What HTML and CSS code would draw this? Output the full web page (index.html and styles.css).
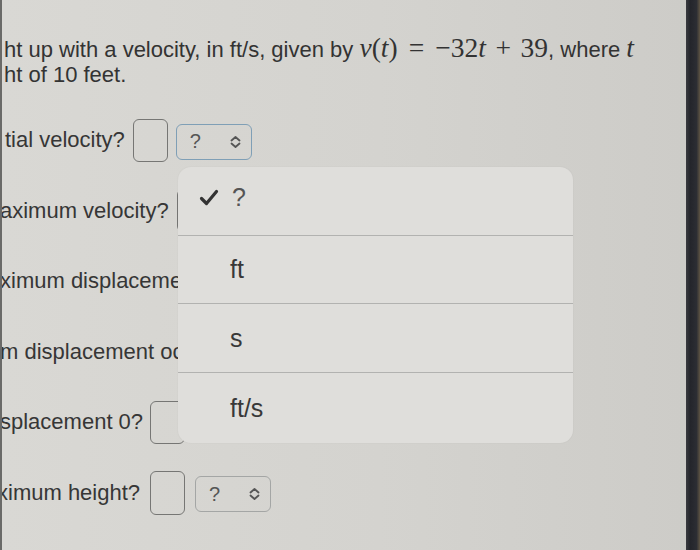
FILE: index.html
```html
<!DOCTYPE html>
<html>
<head>
<meta charset="utf-8">
<link rel="stylesheet" href="styles.css">
</head>
<body>
<div class="frame">
  <div class="screen">
    <p class="intro">ht up with a velocity, in ft/s, given by <span class="math"><i>v</i>(<i>t</i>)<span class="rel">=</span>−32<i>t</i><span class="bin">+</span>39</span>, where <span class="math"><i>t</i></span><br>ht of 10 feet.</p>
    <div class="qs">
      <div class="row r1"><span class="label">tial velocity?</span><span class="box"></span><span class="select focus"><span class="q">?</span><svg class="chev" width="11" height="12" viewBox="0 0 11 12"><path d="M1.5 4.5 L5.5 1 L9.5 4.5 M1.5 7.5 L5.5 11 L9.5 7.5"/></svg></span></div>
      <div class="row r2"><span class="label">aximum velocity?</span><span class="box"></span><span class="select"></span></div>
      <div class="row r3"><span class="label">ximum displacement?</span><span class="box"></span><span class="select"></span></div>
      <div class="row r4"><span class="label">m displacement occur?</span><span class="box"></span><span class="select"></span></div>
      <div class="row r5"><span class="label">splacement 0?</span><span class="box"></span><span class="select"></span></div>
      <div class="row r6"><span class="label">ximum height?</span><span class="box"></span><span class="select"><span class="q">?</span><svg class="chev" width="11" height="12" viewBox="0 0 11 12"><path d="M1.5 4.5 L5.5 1 L9.5 4.5 M1.5 7.5 L5.5 11 L9.5 7.5"/></svg></span></div>
    </div>
    <div class="popup">
      <div class="opt o1"><span class="chk"><svg width="20" height="17" viewBox="0 0 20 17"><path d="M2.5 9.5 L7.5 14.5 L17.5 2.5"/></svg></span><span class="otext dim">?</span></div>
      <div class="opt o2"><span class="chk"></span><span class="otext">ft</span></div>
      <div class="opt o3"><span class="chk"></span><span class="otext">s</span></div>
      <div class="opt o4"><span class="chk"></span><span class="otext">ft/s</span></div>
    </div>
  </div>
  <div class="bezel"></div>
</div>
</body>
</html>
```
FILE: styles.css
```css
html, body {
  margin: 0;
  padding: 0;
  width: 700px;
  height: 550px;
  overflow: hidden;
}
.frame {
  display: flex;
  width: 700px;
  height: 550px;
  font-family: "Liberation Sans", Arial, sans-serif;
  color: #333;
}
.screen {
  position: relative;
  flex: 1;
  overflow: hidden;
  border-left: 2px solid #6a6a68;
  background: linear-gradient(90deg, #d9d8d4 0%, #d4d3cf 55%, #cdccc8 100%);
}
.bezel {
  width: 14px;
  background: linear-gradient(90deg, #3a3b40 0%, #24252b 30%, #2c2d33 75%, #5e5443 100%);
}
.intro {
  margin: 0;
  padding: 37px 0 0 2px;
  font-size: 22px;
  line-height: 25px;
  white-space: nowrap;
}
.math {
  font-family: "Liberation Serif", "Times New Roman", serif;
  font-size: 1.25em;
  line-height: 0;
}
.math i {
  font-style: italic;
}
.rel {
  margin: 0 0.4em;
}
.bin {
  margin: 0 0.35em;
}
.qs {
  display: grid;
  grid-auto-rows: 44px;
  row-gap: 26.6px;
  margin-top: 31px;
}
.row {
  display: flex;
  align-items: center;
  gap: 8px;
  white-space: nowrap;
  font-size: 22px;
  color: #363636;
}
.r1 { margin-left: 3px; gap: 8px; }
.r2 { margin-left: -2px; }
.r3 { margin-left: -2px; }
.r4 { margin-left: -2px; }
.r5 { margin-left: -2px; gap: 7px; }
.r6 { margin-left: -5px; gap: 10px; }
.box {
  flex: none;
  width: 35px;
  height: 43px;
  box-sizing: border-box;
  border: 1.5px solid #767674;
  border-radius: 6px;
}
.r6 .box { height: 44px; }
.select {
  flex: none;
  width: 76px;
  height: 36px;
  box-sizing: border-box;
  border: 1.5px solid #a4a6a5;
  border-radius: 6px;
  display: flex;
  align-items: center;
  justify-content: space-between;
  padding: 0 10px 0 13px;
  margin-top: 3px;
}
.select.focus {
  border-color: #7f9fb6;
}
.q {
  font-size: 20px;
  color: #555;
}
.chev path {
  fill: none;
  stroke: #555;
  stroke-width: 1.8;
  stroke-linecap: round;
  stroke-linejoin: round;
}
.popup {
  position: absolute;
  left: 176px;
  top: 167px;
  width: 395px;
  height: 276px;
  border-radius: 13px;
  background: #dfdedb;
  box-shadow: 0 0 2px rgba(0, 0, 0, 0.06);
  display: flex;
  flex-direction: column;
  overflow: hidden;
}
.opt {
  flex: none;
  box-sizing: border-box;
  display: flex;
  align-items: center;
  padding-left: 21px;
}
.o1 { height: 68px; padding-bottom: 8px; }
.o2 { height: 68px; border-top: 1px solid #b2b2b0; }
.o3 { height: 69px; border-top: 1px solid #b2b2b0; }
.o4 { flex: 1; border-top: 1px solid #b2b2b0; }
.chk {
  width: 31px;
  flex: none;
  display: flex;
  align-items: center;
}
.chk path {
  fill: none;
  stroke: #333;
  stroke-width: 3.2;
  stroke-linecap: round;
  stroke-linejoin: round;
}
.otext {
  font-size: 25px;
  color: #383838;
}
.otext.dim {
  color: #555;
  margin-left: 2px;
}
```
